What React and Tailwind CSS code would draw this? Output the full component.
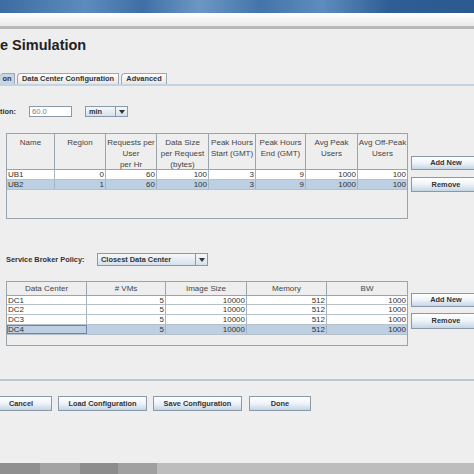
const userHeaders = [
  'Name',
  'Region',
  'Requests per\nUser\nper Hr',
  'Data Size\nper Request\n(bytes)',
  'Peak Hours\nStart (GMT)',
  'Peak Hours\nEnd (GMT)',
  'Avg Peak\nUsers',
  'Avg Off-Peak\nUsers',
];

const users = [
  ['UB1', '0', '60', '100', '3', '9', '1000', '100'],
  ['UB2', '1', '60', '100', '3', '9', '1000', '100'],
];

const dcHeaders = ['Data Center', '# VMs', 'Image Size', 'Memory', 'BW'];

const dcs = [
  ['DC1', '5', '10000', '512', '1000'],
  ['DC2', '5', '10000', '512', '1000'],
  ['DC3', '5', '10000', '512', '1000'],
  ['DC4', '5', '10000', '512', '1000'],
];

function Btn({ children, className = '' }) {
  return (
    <div
      className={`shrink-0 flex items-center justify-center border border-[#8a99a8] bg-gradient-to-b from-white via-[#eef3f8] to-[#c5d5e5] text-[7.4px] font-bold text-[#333] ${className}`}
    >
      {children}
    </div>
  );
}

function Arrow() {
  return (
    <svg width="6" height="4" viewBox="0 0 6 4">
      <path d="M0 0h6L3 4z" fill="#333" />
    </svg>
  );
}

function Select({ label, className = '' }) {
  return (
    <div className={`flex border border-[#8a99a8] bg-gradient-to-b from-[#f5f8fb] to-[#d6e1ec] ${className}`}>
      <div className="flex-1 flex items-center pl-[3px] text-[7.4px] font-bold text-[#333]">{label}</div>
      <div className="w-[12px] border-l border-[#8a99a8] flex items-center justify-center">
        <Arrow />
      </div>
    </div>
  );
}

function Tab({ children, active, className = '' }) {
  return (
    <div
      className={`h-[11px] flex items-center justify-center border border-b-0 border-[#9aa8b6] rounded-tl-[4px] text-[7.4px] font-bold text-[#333] ${
        active ? 'bg-[#c4d6e8]' : 'bg-gradient-to-b from-white to-[#e6e6e6]'
      } ${className}`}
    >
      {children}
    </div>
  );
}

export default function App() {
  return (
    <div className="w-[474px] h-[474px] overflow-hidden bg-[#eeeeee] flex flex-col font-['Liberation_Sans',Arial,sans-serif] text-[#333]">
      {/* window chrome */}
      <div className="h-[13px] shrink-0 bg-[linear-gradient(90deg,#3c6ca2_0%,#5d8bbd_18%,#3f6fa6_30%,#6c97c4_42%,#4374aa_55%,#5f8cbd_68%,#2f5e96_82%,#2b5990_100%)]" />
      <div className="h-[13px] shrink-0 bg-gradient-to-b from-white to-[#e9e9e9]" />
      <div className="h-[3px] shrink-0 bg-[#b8b8b8]" />

      {/* title */}
      <div className="h-[44px] shrink-0 pt-[7px]">
        <div className="text-[14.5px] leading-[18px] font-bold text-[#222]">e Simulation</div>
      </div>

      {/* tabs */}
      <div className="h-[11px] shrink-0 flex items-end">
        <Tab active className="w-[15px] rounded-none border-l-0">on</Tab>
        <Tab className="w-[102px] ml-[2px]">Data Center Configuration</Tab>
        <Tab className="w-[46px] ml-[2px]">Advanced</Tab>
      </div>
      <div className="h-[2px] shrink-0 bg-[#c3d3e2]" />

      {/* duration row */}
      <div className="mt-[20px] h-[11px] shrink-0 flex items-center">
        <div className="w-[29px] text-[7.4px] font-bold">tion:</div>
        <div className="w-[43px] h-[11px] border border-[#8a99a8] bg-white flex items-center pl-[2px] text-[7.6px] text-[#6f8294]">
          60.0
        </div>
        <Select label="min" className="ml-[13px] w-[43px] h-[11px]" />
      </div>

      {/* user bases */}
      <div className="mt-[16px] shrink-0 flex pl-[6px]">
        <div className="w-[402px] h-[86px] border border-[#9aa4ad] flex flex-col text-[8px]">
          <div className="grid grid-cols-[48px_51px_51px_52px_47px_50px_52px_49px] h-[36px] border-b border-[#9aa4ad]">
            {userHeaders.map((h) => (
              <div key={h} className="border-r border-[#9aa4ad] last:border-r-0 text-center pt-[3px] leading-[11px] whitespace-pre-line text-[#444]">
                {h}
              </div>
            ))}
          </div>
          {users.map((r, ri) => (
            <div
              key={r[0]}
              className={`grid grid-cols-[48px_51px_51px_52px_47px_50px_52px_49px] h-[10px] border-b border-[#b7c0c9] ${
                ri === 1 ? 'bg-[#bccfe3]' : 'bg-white'
              }`}
            >
              {r.map((c, ci) => (
                <div
                  key={ci}
                  className={`border-r border-[#a9b3bd] last:border-r-0 leading-[9px] px-[1px] ${ci === 0 ? 'text-left' : 'text-right'}`}
                >
                  {c}
                </div>
              ))}
            </div>
          ))}
        </div>
        <div className="ml-[3px] pt-[23px] flex flex-col gap-[7px]">
          <Btn className="w-[70px] h-[14px]">Add New</Btn>
          <Btn className="w-[70px] h-[15px]">Remove</Btn>
        </div>
      </div>

      {/* broker policy */}
      <div className="mt-[34px] h-[13px] shrink-0 flex items-center pl-[6px]">
        <div className="w-[91px] text-[7.4px] font-bold">Service Broker Policy:</div>
        <Select label="Closest Data Center" className="w-[111px] h-[13px]" />
      </div>

      {/* data centers */}
      <div className="mt-[15px] shrink-0 flex pl-[6px]">
        <div className="w-[402px] h-[65px] border border-[#9aa4ad] flex flex-col text-[8px]">
          <div className="grid grid-cols-[80px_79px_81px_80px_80px] h-[14px] border-b border-[#9aa4ad]">
            {dcHeaders.map((h) => (
              <div key={h} className="border-r border-[#9aa4ad] last:border-r-0 text-center leading-[13px] text-[#444]">
                {h}
              </div>
            ))}
          </div>
          {dcs.map((r, ri) => (
            <div
              key={r[0]}
              className={`grid grid-cols-[80px_79px_81px_80px_80px] border-b border-[#b7c0c9] ${
                ri === 0 ? 'h-[9px]' : 'h-[10px]'
              } ${ri === 3 ? 'bg-[#bccfe3]' : 'bg-white'}`}
            >
              {r.map((c, ci) => (
                <div
                  key={ci}
                  className={`border-r border-[#a9b3bd] last:border-r-0 leading-[9px] px-[1px] ${
                    ci === 0 ? 'text-left' : 'text-right'
                  } ${ri === 3 && ci === 0 ? 'outline outline-1 -outline-offset-1 outline-[#6c87a3]' : ''}`}
                >
                  {c}
                </div>
              ))}
            </div>
          ))}
        </div>
        <div className="ml-[3px] pt-[12px] flex flex-col gap-[6px]">
          <Btn className="w-[70px] h-[14px]">Add New</Btn>
          <Btn className="w-[70px] h-[16px]">Remove</Btn>
        </div>
      </div>

      {/* footer */}
      <div className="mt-[33px] h-[2px] shrink-0 bg-[#b9c6d3]" />
      <div className="mt-[15px] shrink-0 flex gap-[6px]">
        <Btn className="ml-[-10px] w-[62px] h-[15px]">Cancel</Btn>
        <Btn className="w-[89px] h-[15px]">Load Configuration</Btn>
        <Btn className="w-[89px] h-[15px]">Save Configuration</Btn>
        <Btn className="ml-[1px] w-[62px] h-[15px]">Done</Btn>
      </div>
      <div className="flex-1" />
      <div className="h-[11px] shrink-0 flex">
        <div className="w-[40px] bg-[#8f8f8f]" />
        <div className="w-[40px] bg-[#a3a3a3]" />
        <div className="w-[38px] bg-[#8c8c8c]" />
        <div className="w-[39px] bg-[#a0a0a0]" />
        <div className="flex-1 bg-[#bdbdbd]" />
      </div>
    </div>
  );
}
